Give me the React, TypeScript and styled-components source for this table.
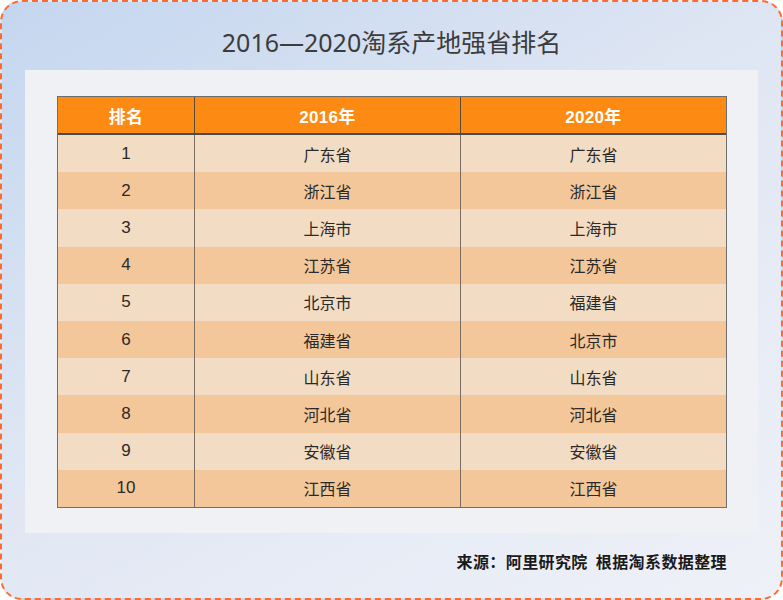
import React from "react";
import styled, { createGlobalStyle } from "styled-components";

const Global = createGlobalStyle`
  html, body { margin: 0; padding: 0; background: #ffffff; }
  body { font-family: "Liberation Sans", "Noto Sans CJK SC", sans-serif; }
  * { box-sizing: border-box; }
`;

const Card = styled.div`
  width: 783px;
  height: 600px;
  border: 2px dashed #ff6a2e;
  border-radius: 22px;
  background: linear-gradient(150deg, #c4d6ef 0%, #dfe6f3 45%, #eff1f8 100%);
  display: flex;
  flex-direction: column;
  padding: 0 23px;
`;

const Title = styled.h1`
  margin: 0;
  height: 68px;
  display: flex;
  align-items: center;
  justify-content: center;
  padding-top: 10px;
  font-family: "Noto Sans", "Noto Sans CJK SC", sans-serif;
  font-weight: 400;
  font-size: 25px;
  color: #3c3c3c;
`;

const Panel = styled.div`
  background: #eff1f4;
  height: 463px;
  padding: 26px 31px 25px 32px;
`;

const Table = styled.div`
  border: 1px solid #6e6e6e;
  display: grid;
  grid-template-columns: 136px 266px 1fr;
  grid-template-rows: 38px repeat(10, 1fr);
  height: 100%;
`;

const HeadCell = styled.div<{ $first?: boolean }>`
  background: #fd8a12;
  color: #ffffff;
  font-weight: 700;
  font-size: 17px;
  letter-spacing: 0.3px;
  display: flex;
  align-items: center;
  justify-content: center;
  border-bottom: 2px solid #4a4a4a;
  border-left: ${(p) => (p.$first ? "none" : "1px solid #5a4a3a")};
`;

const Cell = styled.div<{ $alt: boolean; $first?: boolean }>`
  background: ${(p) => (p.$alt ? "#f4c79a" : "#f2dcc4")};
  color: #2a2a2a;
  font-size: ${(p) => (p.$first ? "17px" : "16px")};
  display: flex;
  align-items: center;
  justify-content: center;
  border-left: ${(p) => (p.$first ? "none" : "1px solid #7a6e62")};
`;

const Footer = styled.div`
  flex: 1;
  display: flex;
  align-items: center;
  justify-content: flex-end;
  padding-right: 31px;
  padding-bottom: 10px;
  font-weight: 700;
  font-size: 16px;
  letter-spacing: 0.4px;
  color: #1a1a1a;
  font-family: "Noto Sans CJK SC", sans-serif;
`;

const data: [string, string][] = [
  ["广东省", "广东省"],
  ["浙江省", "浙江省"],
  ["上海市", "上海市"],
  ["江苏省", "江苏省"],
  ["北京市", "福建省"],
  ["福建省", "北京市"],
  ["山东省", "山东省"],
  ["河北省", "河北省"],
  ["安徽省", "安徽省"],
  ["江西省", "江西省"],
];

export default function App() {
  return (
    <>
      <Global />
      <Card>
        <Title>2016—2020淘系产地强省排名</Title>
        <Panel>
          <Table>
            <HeadCell $first>排名</HeadCell>
            <HeadCell>2016年</HeadCell>
            <HeadCell>2020年</HeadCell>
            {data.map(([a, b], i) => (
              <React.Fragment key={i}>
                <Cell $alt={i % 2 === 1} $first>{i + 1}</Cell>
                <Cell $alt={i % 2 === 1}>{a}</Cell>
                <Cell $alt={i % 2 === 1}>{b}</Cell>
              </React.Fragment>
            ))}
          </Table>
        </Panel>
        <Footer>来源：阿里研究院&nbsp;&nbsp;根据淘系数据整理</Footer>
      </Card>
    </>
  );
}
